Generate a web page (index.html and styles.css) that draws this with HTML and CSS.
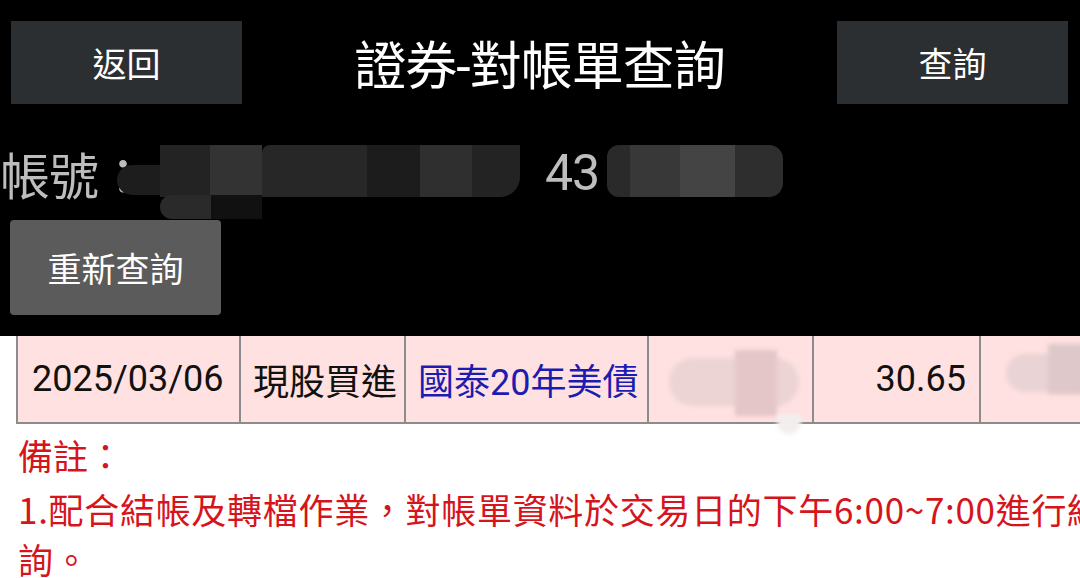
FILE: index.html
```html
<!DOCTYPE html>
<html lang="zh-Hant">
<head>
  <meta charset="UTF-8">
  <meta name="viewport" content="width=device-width, initial-scale=1.0">
  <title>證券-對帳單查詢</title>
  <link rel="stylesheet" href="styles.css">
</head>
<body>
  <div class="top">
    <div class="header">
      <button class="btn-head">返回</button>
      <h1>證券-對帳單查詢</h1>
      <button class="btn-head">查詢</button>
    </div>

    <div class="account">
      <span class="label">帳號：</span>
      <span class="mask mask-1">
        <i class="m-end"></i>
        <i class="m-a"></i>
        <i class="m-b"></i>
        <i class="m-c"></i>
        <i class="m-d"></i>
        <i class="m-e"></i>
        <i class="m-f"></i>
        <i class="m-tail"></i>
      </span>
      <span class="acct-no">43</span>
      <span class="mask mask-2">
        <i class="m-a"></i>
        <i class="m-b"></i>
        <i class="m-c"></i>
        <i class="m-d"></i>
      </span>
    </div>

    <button class="btn-again">重新查詢</button>
  </div>

  <div class="content">
    <table class="list">
      <colgroup>
        <col style="width:223px">
        <col style="width:165px">
        <col style="width:243px">
        <col style="width:165px">
        <col style="width:167px">
        <col style="width:150px">
      </colgroup>
      <tr>
        <td>2025/03/06</td>
        <td>現股買進</td>
        <td class="stock">國泰20年美債</td>
        <td class="hidden"><span class="smudge s1"></span><span class="smudge s2"></span><span class="smudge s3"></span></td>
        <td class="num">30.65</td>
        <td class="hidden"><span class="smudge s4"></span><span class="smudge s5"></span></td>
      </tr>
    </table>

    <div class="notes">
      <div class="note-title">備註：</div>
      <div class="note-line">1.配合結帳及轉檔作業，對帳單資料於交易日的下午6:00~7:00進行結<br>詢。</div>
    </div>
  </div>
</body>
</html>
```

FILE: styles.css
```css
* { box-sizing: border-box; }
body {
  margin: 0;
  background: #fff;
  font-family: Roboto, "Noto Sans CJK TC", sans-serif;
  overflow: hidden;
  width: 1080px;
  height: 578px;
}
button {
  font-family: Roboto, "Noto Sans CJK TC", sans-serif;
  color: #fff;
  border: none;
  cursor: pointer;
}

/* 上方黑色區塊 */
.top {
  background: #000;
  height: 336px;
  padding-top: 21px;
}
.header {
  display: flex;
  justify-content: space-between;
  align-items: center;
  padding: 0 12px 0 11px;
}
.btn-head {
  width: 231px;
  height: 83px;
  background: #2c2f32;
  font-size: 34px;
  padding: 0;
}
.header h1 {
  margin: 0;
  color: #fff;
  font-size: 52px;
  font-weight: normal;
  letter-spacing: -1px;
}

.account {
  display: flex;
  align-items: center;
  height: 85px;
  margin-top: 26px;
  font-size: 50px;
  color: #bdbdbd;
}
.account .label {
  width: 117px;
  white-space: nowrap;
  letter-spacing: -1px;
}
.acct-no {
  margin-left: 25px;
  font-size: 50px;
  letter-spacing: -1px;
}
.mask {
  position: relative;
  display: flex;
  height: 52px;
  margin-top: -4px;
}
.mask i { display: block; height: 100%; }
.mask-1 { width: 403px; }
.mask-1 .m-end { width: 43px; height: 30px; margin-top: 20px; background: #1d1d1d; border-radius: 15px 0 0 15px; }
.mask-1 .m-a { width: 50px; background: #232323; }
.mask-1 .m-b { width: 52px; background: #333; }
.mask-1 .m-c { width: 105px; background: #272727; border-radius: 8px 0 0 0; }
.mask-1 .m-d { width: 53px; background: #1c1c1c; }
.mask-1 .m-e { width: 52px; background: #2f2f2f; }
.mask-1 .m-f { width: 48px; background: #232323; border-radius: 0 0 20px 0; }
.mask-1 .m-tail {
  position: absolute;
  left: 43px;
  top: 50px;
  width: 102px;
  height: 24px;
  background: linear-gradient(90deg, #2a2a2a 50%, #111 50%);
  border-radius: 12px 0 0 12px;
}
.mask-2 { width: 176px; margin-left: 8px; }
.mask-2 .m-a { width: 23px; background: #2a2a2a; border-radius: 12px 0 0 12px; }
.mask-2 .m-b { width: 50px; background: #383838; }
.mask-2 .m-c { width: 55px; background: #444; }
.mask-2 .m-d { width: 48px; background: #2e2e2e; border-radius: 0 14px 14px 0; }

.btn-again {
  display: block;
  margin: 5px 0 0 10px;
  width: 211px;
  height: 95px;
  background: #5b5b5b;
  border-radius: 4px;
  font-size: 34px;
  padding: 0;
}

/* 清單 */
.list {
  margin-left: 16px;
  border-collapse: collapse;
  table-layout: fixed;
  width: 1113px;
  background: #ffe1e1;
}
.list td {
  height: 87px;
  border: 2px solid #8c8c8c;
  border-top: none;
  padding: 0 13px 0 12px;
  font-size: 36px;
  color: #111;
  white-space: nowrap;
  overflow: hidden;
  vertical-align: middle;
}
.list td:first-child { padding-left: 14px; }
.list td.stock { color: #1c1cb0; }
.list td.num { text-align: right; padding-right: 13px; }
.list td.hidden { position: relative; overflow: visible; }
.smudge { position: absolute; display: block; filter: blur(2px); }
.s1 { left: 20px; top: 22px; width: 130px; height: 48px; background: #ecd4d5; border-radius: 24px; }
.s2 { left: 86px; top: 14px; width: 42px; height: 66px; background: #e4c6c8; }
.s3 { left: 128px; top: 78px; width: 24px; height: 20px; background: #f3eeee; border-radius: 0 0 12px 12px; }
.s4 { left: 25px; top: 18px; width: 90px; height: 38px; background: #ead3d4; border-radius: 19px; }
.s5 { left: 67px; top: 8px; width: 40px; height: 50px; background: #dfc8ca; }

/* 備註 */
.notes {
  padding: 6px 0 0 18px;
  color: #d6141c;
  font-family: "Noto Sans CJK TC", sans-serif;
  font-size: 35px;
}
.note-title { line-height: 50px; margin-bottom: 4px; }
.note-line { line-height: 50px; white-space: nowrap; letter-spacing: 0.7px; }
```
